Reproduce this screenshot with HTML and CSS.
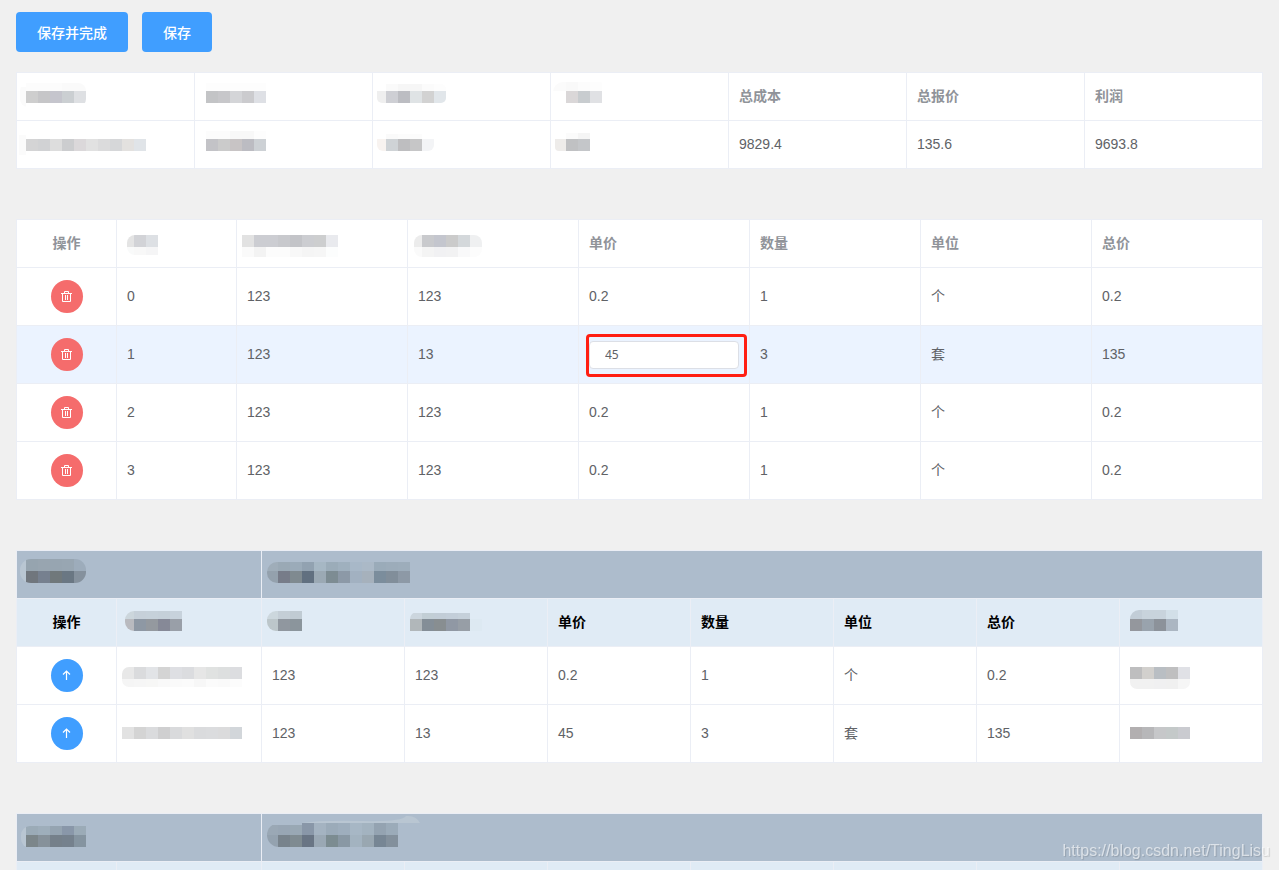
FILE: index.html
```html
<!DOCTYPE html>
<html lang="zh-CN">
<head>
    <meta charset="UTF-8">
    <meta name="viewport" content="width=device-width, initial-scale=1.0">
    <title>报价单</title>
    <link rel="stylesheet" href="styles.css">
</head>
<body>
    <svg class="sprite" aria-hidden="true">
        <symbol id="icon-delete" viewBox="0 0 11 11">
            <path d="M0 2.5h11M3.5 2.5v-2h4v2M1.5 2.5v8h8v-8M4.5 4v5M6.5 4v5" fill="none" stroke="currentColor"/>
        </symbol>
        <symbol id="icon-top" viewBox="0 0 11 11">
            <path d="M5.5 10v-9M2 4.5L5.5 1L9 4.5" fill="none" stroke="currentColor" stroke-width="1.2"/>
        </symbol>
    </svg>

    <main class="page">
        <div class="toolbar">
            <button type="button" class="btn">保存并完成</button>
            <button type="button" class="btn">保存</button>
        </div>

        <table class="table">
            <thead>
                <tr>
                    <th><svg class="mosaic" data-clip="-7 -2 66 24 8" data-rows="-7 2 20 6 #fbfbfb|-1 -2 8 12 #fcfcfc #fcfcfc #fcfcfc #fafafa #fafafa|-1 6 12 12 #cecece #c6c6c8 #c5c5cd #cbcfd2 #dee0e3"></svg></th>
                    <th><svg class="mosaic" data-rows="1 -2 8 12 #fdfdfd #fdfdfd #fdfdfd #fdfdfd #fdfdfd|1 6 12 12 #c3c4c6 #c7c7ca #d4d5d8 #cbcbce #dee0e5"></svg></th>
                    <th><svg class="mosaic" data-clip="-6 -1 69 19 5" data-rows="3 -1 7 12 #fafafa #f6f6f6 #f6f6f6 #fbfbfb #fdfdfd|-6 6 12 9 #efefef #cecfd4 #bcbdc2 #dfe3e5 #d2d2d2 #e1e6ea"></svg></th>
                    <th><svg class="mosaic" data-clip="-8 -3 56 30 10" data-rows="-8 -3 9 13 #fbfbfb #f9f9f9 #fcfcfc #fdfdfd|5 6 12 12 #dad7d8 #c8cccf #e0e1e4"></svg></th>
                    <th>总成本</th>
                    <th>总报价</th>
                    <th>利润</th>
                </tr>
            </thead>
            <tbody>
                <tr>
                    <td><svg class="mosaic" data-rows="-8 2 20 7 #fbfbfb|-1 6 12 12 #d4d4d5 #d1d2d4 #dddddd #cccdcf #dbd8da #e1e1e1 #dbdbdc #d6d7d9 #e3e1df #e0e4e8"></svg></td>
                    <td><svg class="mosaic" data-rows="1 -2 8 12 #fcfcfc #fcfcfc #f8f8f8 #f8f8f8 #fdfdfd|1 6 12 12 #c3c3c7 #cbcbcb #c8c4c5 #bcbcc2 #cdd1d5"></svg></td>
                    <td><svg class="mosaic" data-clip="-6 1 57 17 6" data-rows="3 1 5 12 #fafafa #fcfcfc #fcfcfc|-6 6 12 9 #f8f3f0 #cfd3d6 #bebec0 #c6c6c7 #f3f4f6"></svg></td>
                    <td><svg class="mosaic" data-clip="-6 -1 45 19 4" data-rows="5 0 6 12 #fbfbfb #f5f5f5|-6 6 12 11 #eeecea #c0c1c3 #c4c6c9"></svg></td>
                    <td>9829.4</td>
                    <td>135.6</td>
                    <td>9693.8</td>
                </tr>
            </tbody>
        </table>

        <table class="table">
            <colgroup>
                <col class="col-action">
                <col class="col-index">
                <col span="6">
            </colgroup>
            <thead>
                <tr>
                    <th class="center">操作</th>
                    <th><svg class="mosaic" data-clip="0 3 40 20 8" data-rows="0 3 12 7 #e4e4e4 #d2d3d7 #dde0e4|0 15 8 7 #f9fafa #f8f8f8 #f5f5f6"></svg></th>
                    <th><svg class="mosaic" data-rows="-5 3 12 12 #e2e2e2 #cccdd2 #cccdd2 #c8c9cd #c3c4c8 #cccdd1 #cdcecf #e9eaee|-5 15 10 12 #fafafa #f3f3f3 #fcfcfc #fcfcfc #f8f8f8 #f5f5f5 #f6f6f6 #fcfdfd"></svg></th>
                    <th><svg class="mosaic" data-clip="-4 3 68 22 8" data-rows="-4 3 12 8 #ececec #c9cacd #c4c6ce #cbcbcb #d4d8db #eff0f1|-4 15 10 8 #fafafa #f4f4f4 #f1f1f3 #f2f2f3 #f9f9fa #fcfcfc"></svg></th>
                    <th>单价</th>
                    <th>数量</th>
                    <th>单位</th>
                    <th>总价</th>
                </tr>
            </thead>
            <tbody>
                <tr>
                    <td class="center"><button type="button" class="circle danger" aria-label="删除"><svg class="icon"><use href="#icon-delete"/></svg></button></td>
                    <td>0</td>
                    <td>123</td>
                    <td>123</td>
                    <td>0.2</td>
                    <td>1</td>
                    <td>个</td>
                    <td>0.2</td>
                </tr>
                <tr class="current">
                    <td class="center"><button type="button" class="circle danger" aria-label="删除"><svg class="icon"><use href="#icon-delete"/></svg></button></td>
                    <td>1</td>
                    <td>123</td>
                    <td>13</td>
                    <td>
                        <div class="edit">
                            <input type="text" class="edit-input" value="45" aria-label="单价">
                        </div>
                    </td>
                    <td>3</td>
                    <td>套</td>
                    <td>135</td>
                </tr>
                <tr>
                    <td class="center"><button type="button" class="circle danger" aria-label="删除"><svg class="icon"><use href="#icon-delete"/></svg></button></td>
                    <td>2</td>
                    <td>123</td>
                    <td>123</td>
                    <td>0.2</td>
                    <td>1</td>
                    <td>个</td>
                    <td>0.2</td>
                </tr>
                <tr>
                    <td class="center"><button type="button" class="circle danger" aria-label="删除"><svg class="icon"><use href="#icon-delete"/></svg></button></td>
                    <td>3</td>
                    <td>123</td>
                    <td>123</td>
                    <td>0.2</td>
                    <td>1</td>
                    <td>个</td>
                    <td>0.2</td>
                </tr>
            </tbody>
        </table>

        <table class="table">
            <colgroup>
                <col class="col-action">
                <col class="col-name">
                <col span="7">
            </colgroup>
            <thead>
                <tr class="group">
                    <th colspan="2"><svg class="mosaic" data-clip="-7 -4 66 24 11" data-rows="-7 -4 24 6 #b9c6d2|-1 -4 12 12 #96a4af #98a5b0 #97a5b1 #98a6b2 #9dacbb|-1 8 12 12 #70767d #76808f #70787b #6a7783 #85919d"></svg></th>
                    <th colspan="7"><svg class="mosaic" data-clip="-5 -1 154 21 10" data-rows="-5 -1 9 11 #9fadb9 #9aa9b5 #9babb9 #92a2b1 #a6b7c4 #9bacb9 #9fb0be #a8b8c8 #abb9c7 #9aabb9 #9cacba #9dadbb|-5 8 12 11 #94a1ad #777c89 #7f8a90 #617080 #9ba9b4 #7d8c93 #8c99a7 #a2b1c1 #a6b1bc #7b8d9c #818e9a #8d99a6"></svg></th>
                </tr>
                <tr class="sub">
                    <th class="center">操作</th>
                    <th><svg class="mosaic" data-clip="-2 0 80 20 9" data-rows="-2 0 8 9 #ccd6dc #c6d0d9 #c6d1da #c5d0d9 #c7d2dc|-2 8 12 9 #b9babf #8e98a4 #94999f #868997 #999fa8"></svg></th>
                    <th><svg class="mosaic" data-clip="-5 0 60 20 9" data-rows="-5 0 8 11 #ccd7dd #c4ced6 #c0cbd3|-5 8 12 11 #bcc6ca #90979f #8b959c"></svg></th>
                    <th><svg class="mosaic" data-clip="-5 1 80 30 7" data-rows="-5 2 6 12 #ccd6de #c2ced5 #c2cdd7 #c3ced9 #c5d0da|-5 8 12 12 #b1b7ba #848e97 #888e91 #9098a4 #979ea6 #dde9f2"></svg></th>
                    <th>单价</th>
                    <th>数量</th>
                    <th>单位</th>
                    <th>总价</th>
                    <th><svg class="mosaic" data-clip="0 -1 60 32 9" data-rows="0 -1 9 12 #c2cdd7 #c8d3dc #c8d3dc #d2dfe8|0 8 12 12 #94979d #99a3ad #8c929a #abb6c2"></svg></th>
                </tr>
            </thead>
            <tbody>
                <tr>
                    <td class="center"><button type="button" class="circle primary" aria-label="上移"><svg class="icon"><use href="#icon-top"/></svg></button></td>
                    <td><svg class="mosaic" data-clip="-5 3 130 20 7" data-rows="-5 3 12 12 #e8e8e8 #dadbdd #e2e4e7 #d4d4d4 #dedfe3 #dbdcdf #e6e6e6 #e0e2e1 #dddfdf #dcdde0|-5 15 8 12 #f5f5f5 #f6f6f6 #f7f7f6 #f9f9f9 #fafafa #fbfbfb #f7f7f7 #fbfbfb #fafafa #fcfcfc"></svg></td>
                    <td>123</td>
                    <td>123</td>
                    <td>0.2</td>
                    <td>1</td>
                    <td>个</td>
                    <td>0.2</td>
                    <td><svg class="mosaic" data-clip="0 -6 60 31 7" data-rows="0 3 12 12 #bebebf #d2d0cd #b9bec3 #bfbfc0 #e0e1e6|0 15 10 12 #f1f1f1 #f1f1f1 #f0f0f1 #f0f0f0 #f6f6f6"></svg></td>
                </tr>
                <tr>
                    <td class="center"><button type="button" class="circle primary" aria-label="上移"><svg class="icon"><use href="#icon-top"/></svg></button></td>
                    <td><svg class="mosaic" data-rows="-5 5 12 12 #e2e2e2 #d4d4d4 #dadbdd #cfcfd0 #d9dadc #e0e0e0 #dadbdd #dbdcde #dbdbdc #d2d6da"></svg></td>
                    <td>123</td>
                    <td>13</td>
                    <td>45</td>
                    <td>3</td>
                    <td>套</td>
                    <td>135</td>
                    <td><svg class="mosaic" data-rows="0 5 12 12 #b2afb0 #b7b7b9 #c6c7c9 #c4c9c9 #cacbd0"></svg></td>
                </tr>
            </tbody>
        </table>

        <table class="table">
            <colgroup>
                <col class="col-action">
                <col class="col-name">
                <col span="7">
            </colgroup>
            <thead>
                <tr class="group">
                    <th colspan="2"><svg class="mosaic" data-clip="-6 0 80 22 9" data-rows="-6 0 22 5 #b9c6d2|-1 0 9 12 #9babb7 #9eaebb #95a4b1 #8997a9 #9babb7|-1 9 12 12 #7c868a #86919a #75808a #75818d #8594a0"></svg></th>
                    <th colspan="7"><svg class="mosaic" data-clip="-5 -3 160 24 12" data-rows="-5 -1 10 11 #9aa8b5 #98a6b4 #99a8b4|30 -3 12 12 #8997a8 #a4b3c1 #9babb9 #9eaebd #a7b7c5 #a3b3c0 #94a3b1 #9babb9|-5 9 12 11 #94a2af #78838c #7f8b91 #697584 #9aa8b4 #7c8c91 #8998a4 #a3b3c0 #99a7b1 #778694 #83909c"><path d="M30 -3Q50 -6 90 -5T134 -10Q144 -11 148 -3Z" fill="#b9c6d2"/></svg></th>
                </tr>
                <tr class="sub">
                    <th></th>
                    <th></th>
                    <th></th>
                    <th></th>
                    <th></th>
                    <th></th>
                    <th></th>
                    <th></th>
                    <th></th>
                </tr>
            </thead>
        </table>
    </main>

    <div class="watermark">https://blog.csdn.net/TingLisu</div>

    <script>
        const NS = 'http://www.w3.org/2000/svg';
        const CELL = 12;

        function addRect(parent, x, y, width, height) {
            const rect = document.createElementNS(NS, 'rect');
            rect.setAttribute('x', x);
            rect.setAttribute('y', y);
            rect.setAttribute('width', width);
            rect.setAttribute('height', height);
            parent.appendChild(rect);
            return rect;
        }

        // data-rows: "x y 高度 首格宽度 颜色 颜色 ..."，多行用 | 分隔
        document.querySelectorAll('.mosaic').forEach((svg, i) => {
            const group = document.createElementNS(NS, 'g');
            svg.appendChild(group);

            if (svg.dataset.clip) {
                const [x, y, w, h, r] = svg.dataset.clip.split(' ');
                const clip = document.createElementNS(NS, 'clipPath');
                clip.id = 'clip' + i;
                addRect(clip, x, y, w, h).setAttribute('rx', r);
                svg.appendChild(clip);
                group.setAttribute('clip-path', `url(#${clip.id})`);
            }

            svg.dataset.rows.split('|').forEach(row => {
                const [x, y, height, first, ...colors] = row.split(' ');
                let left = Number(x);
                colors.forEach((color, n) => {
                    const width = n === 0 ? Number(first) : CELL;
                    addRect(group, left, y, width, height).setAttribute('fill', color);
                    left += width;
                });
            });
        });
    </script>
</body>
</html>
```
FILE: styles.css
```css
* {
    margin: 0;
    padding: 0;
    box-sizing: border-box;
}
body {
    font-family: "Liberation Sans", "Noto Sans CJK SC", sans-serif;
    font-size: 14px;
    line-height: 23px;
    color: #606266;
    background: #f0f0f0;
}
.sprite {
    position: absolute;
    width: 0;
    height: 0;
}
.page {
    height: 100vh;
    padding: 12px 16px 0;
    overflow: hidden;
}
.toolbar {
    display: flex;
    gap: 14px;
    margin-bottom: 20px;
}
.btn {
    height: 40px;
    padding: 0 21px;
    border: none;
    border-radius: 4px;
    background: #409eff;
    color: white;
    font-family: inherit;
    font-size: 14px;
    font-weight: 500;
    cursor: pointer;
}
.table {
    width: 100%;
    margin-bottom: 50px;
    table-layout: fixed;
    border-collapse: separate;
    border-spacing: 0;
    border-top: 1px solid #ebeef5;
    border-left: 1px solid #ebeef5;
    background: white;
}
.table th,
.table td {
    padding: 12px 10px;
    border-right: 1px solid #ebeef5;
    border-bottom: 1px solid #ebeef5;
    text-align: left;
    vertical-align: middle;
}
.table th {
    height: 48px;
    color: #909399;
    font-weight: bold;
}
.table .center {
    text-align: center;
}
.col-action {
    width: 100px;
}
.col-index {
    width: 120px;
}
.col-name {
    width: 145px;
}
.table .group th {
    background: #adbccc;
}
.table .sub th {
    background: #e0ebf5;
    color: black;
}
.current td {
    background: #ebf3ff;
}
.circle {
    display: flex;
    align-items: center;
    justify-content: center;
    width: 32px;
    height: 33px;
    margin: 0 auto;
    border: none;
    border-radius: 50%;
    color: white;
    cursor: pointer;
}
.danger {
    background: #f56c6c;
}
.primary {
    background: #409eff;
}
.icon {
    width: 11px;
    height: 11px;
}
.edit {
    position: relative;
}
.edit::after {
    content: "";
    position: absolute;
    inset: -7px -8px -8px -3px;
    border: 3px solid #ff1e12;
    border-radius: 4px;
    pointer-events: none;
}
.edit-input {
    display: block;
    width: 100%;
    height: 28px;
    padding: 0 15px;
    border: 1px solid #dcdfe6;
    border-radius: 4px;
    background: white;
    color: #606266;
    font-family: "Noto Sans", "Noto Sans CJK SC", sans-serif;
    font-size: 12px;
}
.mosaic {
    display: block;
    width: 100%;
    height: 23px;
    overflow: visible;
}
.watermark {
    position: fixed;
    right: 9px;
    bottom: 8px;
    color: rgba(255, 255, 255, 0.6);
    font-size: 16px;
    text-shadow: 1px 1px 1px rgba(0, 0, 0, 0.15);
    pointer-events: none;
}
```
